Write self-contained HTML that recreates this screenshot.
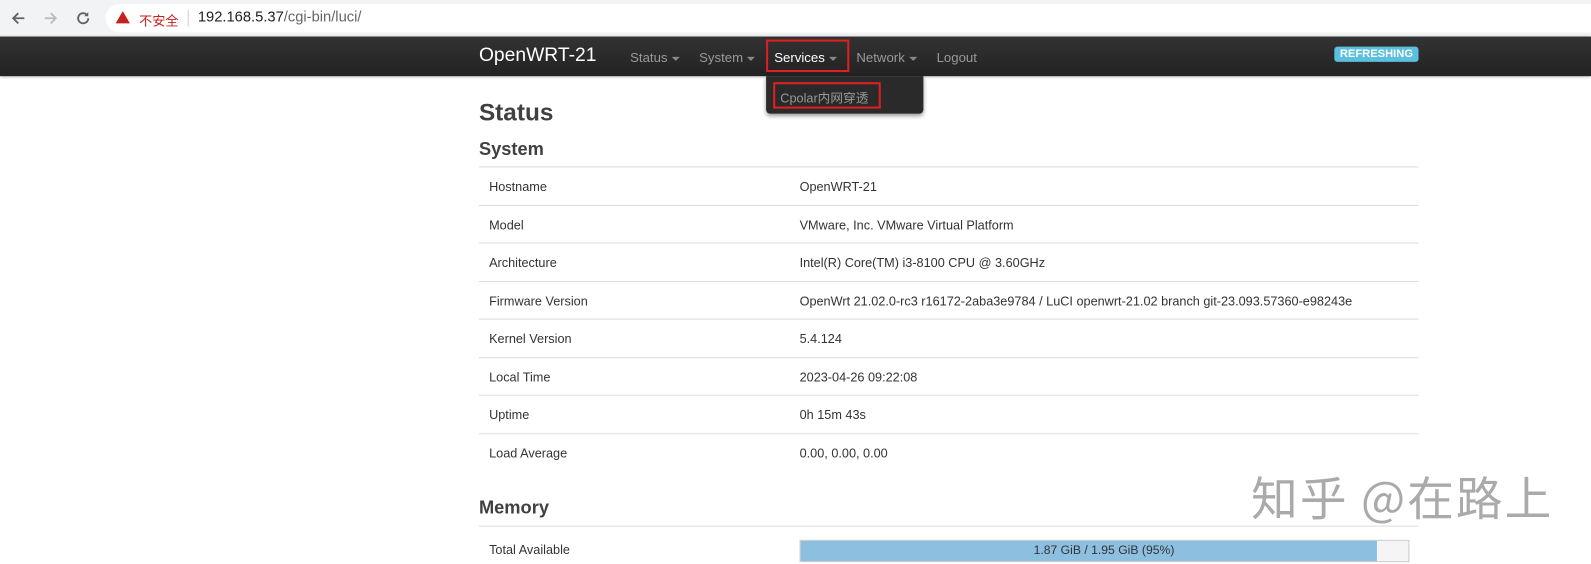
<!DOCTYPE html>
<html><head><meta charset="utf-8"><style>
body{margin:0;width:1591px;height:558px;overflow:hidden;background:#fff;font-family:"Liberation Sans","Noto Sans CJK SC",sans-serif;position:relative}
#w{position:absolute;left:0;top:0;width:1568px;height:550px;transform:scale(1.0147);transform-origin:0 0}
.top{position:absolute;left:0;top:0;width:1568px;height:36px;background:#f1f3f4}
.addr{position:absolute;left:104px;top:4px;right:0;height:28px;background:#fff;border-radius:14px 0 0 14px}
.nav{position:absolute;left:0;top:36px;width:1568px;height:39px;background:linear-gradient(#333,#222);box-shadow:0 1px 3px rgba(0,0,0,.4)}
.a{position:absolute;font-size:13px;color:#999;top:49px}
.a .c{display:inline-block;border-top:4px solid #888;border-left:4px solid transparent;border-right:4px solid transparent;vertical-align:middle;margin-left:4px}
.row{position:absolute;left:472px;width:926px;height:37px;border-top:1px solid #ddd;font-size:12.5px;color:#333}
.row span{position:absolute;top:12px}
h2{position:absolute;margin:0;font-weight:bold;color:#404040}
</style></head><body><div id="w">
<div class="top"><div class="addr"></div>
<svg style="position:absolute;left:10px;top:10px" width="16" height="16" viewBox="0 0 16 16"><path d="M14 8H3M8 3L3 8l5 5" stroke="#5f6368" stroke-width="1.8" fill="none"/></svg>
<svg style="position:absolute;left:42px;top:10px" width="16" height="16" viewBox="0 0 16 16"><path d="M2 8h11M8 3l5 5-5 5" stroke="#bbb" stroke-width="1.8" fill="none"/></svg>
<svg style="position:absolute;left:74px;top:10px" width="16" height="16" viewBox="0 0 16 16"><path d="M13 8a5 5 0 1 1-1.5-3.6" stroke="#5f6368" stroke-width="1.8" fill="none"/><path d="M13 2v4H9z" fill="#5f6368"/></svg>
<div style="position:absolute;left:114px;top:11px;width:0;height:0;border-left:7px solid transparent;border-right:7px solid transparent;border-bottom:12px solid #c5221f"></div>
<div style="position:absolute;left:137px;top:10px;font-size:13px;color:#c5221f">不安全</div>
<div style="position:absolute;left:185px;top:10px;width:1px;height:16px;background:#ccc"></div>
<div style="position:absolute;left:195px;top:9px;font-size:14.5px;color:#202124">192.168.5.37<span style="color:#666">/cgi-bin/luci/</span></div>
</div>
<div class="nav"></div>
<div style="position:absolute;left:472px;top:44px;font-size:19px;color:#fff">OpenWRT-21</div>
<div class="a" style="left:621px">Status<i class="c"></i></div>
<div class="a" style="left:689px">System<i class="c"></i></div>
<div class="a" style="left:763px;color:#fff">Services<i class="c"></i></div>
<div style="position:absolute;left:755px;top:39px;width:78px;height:28px;border:2px solid #e02020"></div>
<div class="a" style="left:844px">Network<i class="c"></i></div>
<div class="a" style="left:923px">Logout</div>
<div style="position:absolute;left:1315px;top:46px;width:83px;height:15px;background:#5bc0de;border-radius:3px;color:#fff;font-size:11px;font-weight:bold;text-align:center;line-height:15px">REFRESHING</div>
<div style="position:absolute;left:755px;top:75px;width:155px;height:37px;background:#2a2a2a;border-radius:0 0 4px 4px;box-shadow:0 2px 4px rgba(0,0,0,.4)"></div>
<div style="position:absolute;left:762px;top:81px;width:102px;height:22px;border:2px solid #e02020"></div>
<div style="position:absolute;left:769px;top:86px;font-size:12.5px;color:#999">Cpolar内网穿透</div>
<h2 style="left:472px;top:98px;font-size:24px">Status</h2>
<h2 style="left:472px;top:137px;font-size:18px">System</h2>
<div class="row" style="top:164px"><span style="left:10px">Hostname</span><span style="left:316px">OpenWRT-21</span></div>
<div class="row" style="top:202px"><span style="left:10px">Model</span><span style="left:316px">VMware, Inc. VMware Virtual Platform</span></div>
<div class="row" style="top:239px"><span style="left:10px">Architecture</span><span style="left:316px">Intel(R) Core(TM) i3-8100 CPU @ 3.60GHz</span></div>
<div class="row" style="top:277px"><span style="left:10px">Firmware Version</span><span style="left:316px">OpenWrt 21.02.0-rc3 r16172-2aba3e9784 / LuCI openwrt-21.02 branch git-23.093.57360-e98243e</span></div>
<div class="row" style="top:314px"><span style="left:10px">Kernel Version</span><span style="left:316px">5.4.124</span></div>
<div class="row" style="top:352px"><span style="left:10px">Local Time</span><span style="left:316px">2023-04-26 09:22:08</span></div>
<div class="row" style="top:389px"><span style="left:10px">Uptime</span><span style="left:316px">0h 15m 43s</span></div>
<div class="row" style="top:427px"><span style="left:10px">Load Average</span><span style="left:316px">0.00, 0.00, 0.00</span></div>
<h2 style="left:472px;top:490px;font-size:18px">Memory</h2>
<div class="row" style="top:518px"><span style="left:10px;top:16px">Total Available</span></div>
<div style="position:absolute;left:788px;top:532px;width:599px;height:20px;border:1px solid #ccc;background:#f5f5f5"></div>
<div style="position:absolute;left:789px;top:533px;width:568px;height:20px;background:#8dbfe0"></div>
<div style="position:absolute;left:788px;top:535px;width:600px;text-align:center;font-size:12px;color:#333">1.87 GiB / 1.95 GiB (95%)</div>
<div style="position:absolute;left:1233px;top:456px;font-size:46px;color:#aaa;letter-spacing:2px;font-family:'Noto Sans CJK SC',sans-serif">知乎 @在路上</div>
</div></body></html>
